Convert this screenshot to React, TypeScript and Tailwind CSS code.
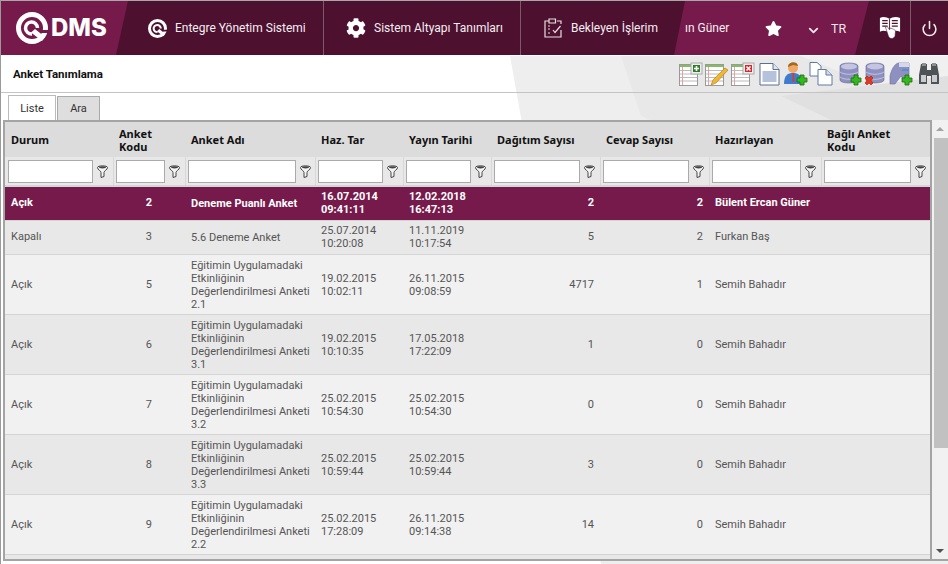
import { ChevronDown, Power } from 'lucide-react';
import { FaCog, FaStar } from 'react-icons/fa';

const font = 'font-["Roboto","Noto_Sans",sans-serif]';

const columns = [
  { label: 'Durum', width: 'w-[108px]', input: 'w-[85px]' },
  { label: 'Anket Kodu', width: 'w-[72px]', input: 'w-[49px]' },
  { label: 'Anket Adı', width: 'w-[130px]', input: 'w-[108px]' },
  { label: 'Haz. Tar', width: 'w-[88px]', input: 'w-[65px]' },
  { label: 'Yayın Tarihi', width: 'w-[88px]', input: 'w-[65px]' },
  { label: 'Dağıtım Sayısı', width: 'w-[109px]', input: 'w-[86px]' },
  { label: 'Cevap Sayısı', width: 'w-[109px]', input: 'w-[86px]' },
  { label: 'Hazırlayan', width: 'w-[112px]', input: 'w-[89px]' },
  { label: 'Bağlı Anket Kodu', width: 'w-[109px]', input: 'w-[87px]' },
];

const evalName = 'Eğitimin Uygulamadaki Etkinliğinin Değerlendirilmesi Anketi ';
const tall = 'h-[60px] [&>td]:pt-[2px]';

const rows = [
  { durum: 'Açık', kod: 2, ad: 'Deneme Puanlı Anket', haz: ['16.07.2014', '09:41:11'], yayin: ['12.02.2018', '16:47:13'], dagitim: 2, cevap: 2, by: 'Bülent Ercan Güner', h: 'h-[34px]' },
  { durum: 'Kapalı', kod: 3, ad: '5.6 Deneme Anket', haz: ['25.07.2014', '10:20:08'], yayin: ['11.11.2019', '10:17:54'], dagitim: 5, cevap: 2, by: 'Furkan Baş', h: 'h-[34px]' },
  { durum: 'Açık', kod: 5, ad: evalName + '2.1', haz: ['19.02.2015', '10:02:11'], yayin: ['26.11.2015', '09:08:59'], dagitim: 4717, cevap: 1, by: 'Semih Bahadır', h: tall },
  { durum: 'Açık', kod: 6, ad: evalName + '3.1', haz: ['19.02.2015', '10:10:35'], yayin: ['17.05.2018', '17:22:09'], dagitim: 1, cevap: 0, by: 'Semih Bahadır', h: tall },
  { durum: 'Açık', kod: 7, ad: evalName + '3.2', haz: ['25.02.2015', '10:54:30'], yayin: ['25.02.2015', '10:54:30'], dagitim: 0, cevap: 0, by: 'Semih Bahadır', h: tall },
  { durum: 'Açık', kod: 8, ad: evalName + '3.3', haz: ['25.02.2015', '10:59:44'], yayin: ['25.02.2015', '10:59:44'], dagitim: 3, cevap: 0, by: 'Semih Bahadır', h: tall },
  { durum: 'Açık', kod: 9, ad: evalName + '2.2', haz: ['25.02.2015', '17:28:09'], yayin: ['26.11.2015', '09:14:38'], dagitim: 14, cevap: 0, by: 'Semih Bahadır', h: tall },
];

function QMark({ size }: { size: number }) {
  return (
    <svg width={size} height={size} viewBox="0 0 32 32" fill="none" className="shrink-0">
      <circle cx="16" cy="16" r="13.500" stroke="#fff" strokeWidth="5" />
      <path d="M21.500 16 A6 6 0 1 0 16 22" stroke="#fff" strokeWidth="3.500" />
      <path d="M20 18 H32 V21 H23Z" fill="currentColor" />
      <path d="M15 20.500 L19 17 L29 25 L26 29Z" fill="#fff" />
    </svg>
  );
}

function TaskIcon() {
  return (
    <svg width="18" height="20" viewBox="0 0 18 20" fill="none" stroke="#e8dfe4" strokeWidth="1.200" className="shrink-0">
      <path d="M5 3 H1 V19 H17 V12 M13 3 H17 V6" />
      <path d="M5 1 H11.500 V5 H5Z" />
      <path d="M4.500 8 h1 M4.500 11 h1 M4.500 15 h1" strokeWidth="1.800" />
      <path d="M9 12 l2 2.500 L16.500 8" />
    </svg>
  );
}

function BookHand() {
  return (
    <svg width="22" height="23" viewBox="0 0 24 25">
      <path d="M1 2 C4 0 9 1 11.500 3 C14 1 19 0 23 2 V17 C19 15 14 16 11.500 18 C9 16 4 15 1 17Z" fill="#fff" />
      <path d="M3.500 5 H9.500 M3.500 8 H9.500 M3.500 11 H9.500 M14 5 H20.500 M14 8 H20.500 M14 11 H20.500" stroke="#4d102f" strokeWidth="1.200" />
      <path d="M11.500 3 V18" stroke="#4d102f" strokeWidth="1" />
      <path d="M7 12 L9 11.500 L11.500 15 L12.500 13 L16 14.500 L18 16 L17.500 22 C15 26 11 25 10 21Z" fill="#fff" stroke="#4d102f" strokeWidth=".6" />
    </svg>
  );
}

function Funnel() {
  return (
    <svg width="11" height="13" viewBox="0 0 11 13" className="shrink-0">
      <path d="M.5 2.500 C.5 .3 10.500 .3 10.500 2.500 C10.500 5 7 5.500 7 7.500 V11.500 L4 12.500 V7.500 C4 5.500 .5 5 .5 2.500Z" fill="#f4f4f4" stroke="#444" strokeWidth="1" />
      <ellipse cx="5.500" cy="2.300" rx="3.500" ry="1.100" fill="#444" />
    </svg>
  );
}

function Plus({ x, y, c = '#35b81d' }: { x: number; y: number; c?: string }) {
  return <path transform={`translate(${x} ${y})`} d="M3 0 H7 V3 H10 V7 H7 V10 H3 V7 H0 V3 H3Z" fill={c} stroke="#176b0c" strokeWidth=".8" />;
}

function Cross({ x, y }: { x: number; y: number }) {
  return <path transform={`translate(${x} ${y})`} d="M1 2 L3 0 L5 2 L7 0 L9 2 L7 4.500 L9 7 L7 9 L5 7 L3 9 L1 7 L3 4.500Z" fill="#e2391f" stroke="#9c1f0f" strokeWidth=".6" />;
}

function Sheet() {
  return (
    <>
      <rect x=".5" y="2.500" width="18" height="21" fill="#fff" stroke="#999" />
      <rect x="1" y="3" width="17" height="2" fill="#7fbf5c" />
      <path d="M1 8.500 H18 M1 12 H18 M1 15.500 H18 M1 19 H18" stroke="#bbb" />
      <path d="M3.500 5 V23" stroke="#e3a3a3" />
    </>
  );
}

function Tool({ w, children }: { w: number; children: React.ReactNode }) {
  return (
    <svg width={w} height="24" viewBox={`0 0 ${w} 24`} className="shrink-0">
      {children}
    </svg>
  );
}

function Db({ x = 1 }: { x?: number }) {
  return (
    <>
      <path d={`M${x} 4 C${x} 0 ${x + 18} 0 ${x + 18} 4 V18 C${x + 18} 22 ${x} 22 ${x} 18Z`} fill="#8e90c0" stroke="#666a90" strokeWidth=".6" />
      <ellipse cx={x + 9} cy="4.500" rx="8" ry="3" fill="#c3c5e2" />
      <path d={`M${x} 10 C${x + 4} 13 ${x + 14} 13 ${x + 18} 10 M${x} 15 C${x + 4} 18 ${x + 14} 18 ${x + 18} 15`} stroke="#c3c5e2" fill="none" />
    </>
  );
}

function Toolbar() {
  return (
    <div className="flex items-center">
      <Tool w={24}><Sheet /><rect x="12" y="1" width="11" height="11" fill="#eee" stroke="#aaa" /><path d="M14 3 h7 v7 h-7z" fill="#2f7d2a" /><path d="M17.500 4 v5 M15 6.500 h5" stroke="#fff" strokeWidth="1.600" /></Tool>
      <div className="ml-[2px]"><Tool w={24}><Sheet /><path d="M6 23 L8 18 L20 6 L23 8 L11 21Z" fill="#f2b632" stroke="#a9761a" strokeWidth=".6" /></Tool></div>
      <div className="ml-[2px]"><Tool w={24}><Sheet /><rect x="12" y="1" width="11" height="11" fill="#eee" stroke="#aaa" /><path d="M14 3 h7 v7 h-7z" fill="#d8262c" /><path d="M15.500 4.500 l4 4 M19.500 4.500 l-4 4" stroke="#fff" strokeWidth="1.600" /></Tool></div>
      <div className="ml-[4px]"><Tool w={21}><path d="M1 1.500 H14 L20 7.500 V23 H1Z" fill="#fff" stroke="#5a6f94" /><path d="M14 1.500 V7.500 H20" fill="#dfe6f2" stroke="#5a6f94" /><rect x="3.500" y="9" width="14" height="11" fill="#b6c2dc" /></Tool></div>
      <div className="ml-[4px]"><Tool w={24}><circle cx="9" cy="6" r="5" fill="#f0a868" /><path d="M4 5 C4 -1 14 -1 14 4 L9 3Z" fill="#a8681c" /><path d="M0 22 C0 13 4 11 9 11 C14 11 18 13 18 22Z" fill="#3f7ccf" /><path d="M8.500 11 h1.500 l.5 9 h-2z" fill="#d13c2c" /><Plus x={13} y={13} /></Tool></div>
      <div className="ml-[1px]"><Tool w={24}><path d="M1 .5 H8 L12 4 V14 H1Z" fill="#fff" stroke="#607aa0" /><path d="M9 7.500 H17 L23 13 V23 H9Z" fill="#fff" stroke="#607aa0" /><path d="M17 7.500 V13 H23" fill="#cfdcf0" stroke="#607aa0" /></Tool></div>
      <div className="ml-[6px]"><Tool w={23}><Db /><Plus x={12} y={13} /></Tool></div>
      <div className="ml-[2px]"><Tool w={21}><Db x={2} /><Cross x={0} y={14} /></Tool></div>
      <div className="ml-[4px]"><Tool w={24}><path d="M1 22 L1 14 C3 5 7 1 10 1 H20 V12 L17 22 L12 14 L6 22Z" fill="#8e90c0" stroke="#6c6f9c" strokeWidth=".6" /><path d="M10 1 H20 V5 H10Z" fill="#d5d7ea" /><path d="M13 8 H20" stroke="#4c8ad6" strokeWidth="1.500" /><Plus x={13} y={13} /></Tool></div>
      <div className="ml-[5px]"><Tool w={22}><path d="M3 2 H9 V8 H13 V2 H19 L21 13 V22 H13 V14 H9 V22 H1 V13Z" fill="#4f5356" /><rect x="3" y="13" width="5" height="7" fill="#c9ccce" /><rect x="14" y="13" width="5" height="7" fill="#c9ccce" /><rect x="4" y="1" width="4" height="3" fill="#8c9092" /><rect x="14" y="1" width="4" height="3" fill="#8c9092" /></Tool></div>
    </div>
  );
}

export default function App() {
  return (
    <div className={`${font} relative w-[948px] h-[564px] overflow-hidden bg-white border-l border-[#9a9a9a] flex flex-col`}>
      {/* background shards behind the form */}
      <svg className="absolute left-0 top-[56px]" width="948" height="508" viewBox="0 0 948 508">
        <path d="M509 0 H948 V508 H600Z" fill="#eeeeee" />
        <path d="M620 0 H948 V200 L640 60Z" fill="#e8e8e8" />
        <path d="M800 0 H948 V60Z" fill="#f0f0f0" />
        <path d="M780 40 L948 20 V100 L830 64Z" fill="#e0e0e0" />
      </svg>

      <header className="relative h-[55px] shrink-0 border-t border-[#a8a8a8] bg-[#4d102f] text-white flex items-stretch">
        <div className="w-[128px] -ml-px pl-[16px] bg-[#751a4a] [clip-path:polygon(0_0,100%_0,calc(100%-12px)_100%,0_100%)] flex items-center gap-[3px] text-[#751a4a]">
          <QMark size={32} />
          <span className='font-["Inter",sans-serif] font-extrabold text-white text-[24px] leading-none'>DMS</span>
        </div>
        <div className="w-[197px] -ml-px pl-[21px] border-r border-[#7b5a6c] flex items-center gap-[8px] text-[12px] text-[#4d102f]">
          <QMark size={19} />
          <span className="text-[#f5eef2]">Entegre Yönetim Sistemi</span>
        </div>
        <div className="w-[197px] pl-[22px] border-r border-[#7b5a6c] flex items-center gap-[8px] text-[12px]">
          <FaCog size={20} className="text-white" />
          <span className="text-[#f5eef2]">Sistem Altyapı Tanımları</span>
        </div>
        <div className="w-[153px] pl-[23px] flex items-center gap-[9px] text-[12px]">
          <TaskIcon />
          <span className="text-[#f5eef2] whitespace-nowrap">Bekleyen İşlerim</span>
        </div>
        <div className="w-[195px] pl-[11px] bg-[#751a4a] [clip-path:polygon(11px_0,100%_0,calc(100%-14px)_100%,0_100%)] flex items-center text-[12px]">
          <span className="w-[80px] text-[#f5eef2] whitespace-nowrap">ın Güner</span>
          <FaStar size={17} className="text-white" />
          <ChevronDown size={15} strokeWidth={3} className="ml-[24px] mt-[4px] text-[#f0e6ec]" />
          <span className="ml-[10px] mt-[2px] text-[12.500px] text-[#f0e6ec]">TR</span>
        </div>
        <div className="w-[42px] border-r border-[#7b5a6c] flex items-center justify-center pb-[2px]">
          <BookHand />
        </div>
        <div className="w-[37px] flex items-center justify-center">
          <Power size={17} strokeWidth={2.200} className="text-[#eee]" />
        </div>
      </header>

      <div className="relative h-[38px] shrink-0 border-b border-[#c4c4c4] border-t border-t-white flex items-center justify-between pl-[12px] pr-[8px]">
        <h1 className="pt-[2px] text-[11.500px] font-bold text-[#111]">Anket Tanımlama</h1>
        <Toolbar />
      </div>

      <div className="relative h-[27px] shrink-0 pl-[7px] flex items-end gap-[1px] text-[11px] text-[#333]">
        <div className="w-[48px] h-[25px] pt-[2px] bg-white border border-b-0 border-[#bbb] flex items-center justify-center">Liste</div>
        <div className="w-[43px] h-[24px] pt-[2px] bg-[#dedede] border border-b-0 border-[#aaa] flex items-center justify-center">Ara</div>
      </div>

      <div className="relative ml-[2px] h-[441px] shrink-0 border-b-2 border-[#a4a4a4] flex overflow-hidden">
        <div className="w-[929px] shrink-0 border-x-2 border-t-2 border-[#a4a4a4] bg-[#f1f1f1] overflow-hidden">
          <table className="w-[925px] table-fixed border-collapse text-[11px] text-[#555]">
            <thead>
              <tr className='h-[35px] bg-[#dcdcdc] text-[#111] text-[11px] font-["Noto_Sans",sans-serif]'>
                {columns.map((col) => (
                  <th key={col.label} className={`${col.width} pl-[6px] pr-[16px] text-left font-bold leading-[13px] align-middle`}>
                    {col.label}
                  </th>
                ))}
              </tr>
              <tr className="h-[29px] bg-[#e8e8e8] border-b-2 border-[#d6d6d6]">
                {columns.map((col) => (
                  <td key={col.label} className="border-r border-[#d8d8d8] last:border-r-0 pl-[2px] first:pl-[3px]">
                    <div className="flex items-center gap-[4px]">
                      <input className={`${col.input} h-[23px] bg-white border border-[#aaa] outline-none`} />
                      <Funnel />
                    </div>
                  </td>
                ))}
              </tr>
            </thead>
            <tbody>
              {rows.map((row, i) => {
                const tone = i === 0 ? 'bg-[#751a4a] text-white font-bold' : i % 2 === 1 ? 'bg-[#e8e8e8]' : 'bg-[#f1f1f1]';
                return (
                  <tr key={row.kod} className={`${row.h} ${tone} border-b border-[#d4d4d4]`}>
                    <td className="px-[6px]">{row.durum}</td>
                    <td className="pr-[33px] text-right">{row.kod}</td>
                    <td className="pl-[6px] pr-[1px] leading-[13px]">{row.ad}</td>
                    <td className="px-[6px] leading-[13px]">{row.haz[0]}<br />{row.haz[1]}</td>
                    <td className="px-[6px] leading-[13px]">{row.yayin[0]}<br />{row.yayin[1]}</td>
                    <td className="pr-[6px] text-right">{row.dagitim}</td>
                    <td className="pr-[6px] text-right">{row.cevap}</td>
                    <td className="px-[6px]">{row.by}</td>
                    <td className="px-[6px]" />
                  </tr>
                );
              })}
              <tr className="h-[60px] bg-[#e8e8e8]">
                <td colSpan={9} />
              </tr>
            </tbody>
          </table>
        </div>
        <div className="flex-1 bg-[#f1f1f1] flex flex-col justify-between">
          <div className="flex flex-col">
            <div className="h-[18px] flex items-center justify-center">
              <div className="w-0 h-0 border-x-[4px] border-x-transparent border-b-[4px] border-b-[#a3a3a3]" />
            </div>
            <div className="h-[310px] ml-[2px] bg-[#c1c1c1]" />
          </div>
          <div className="h-[16px] flex items-center justify-center">
            <div className="w-0 h-0 border-x-[4px] border-x-transparent border-t-[4px] border-t-[#505050]" />
          </div>
        </div>
      </div>
    </div>
  );
}
